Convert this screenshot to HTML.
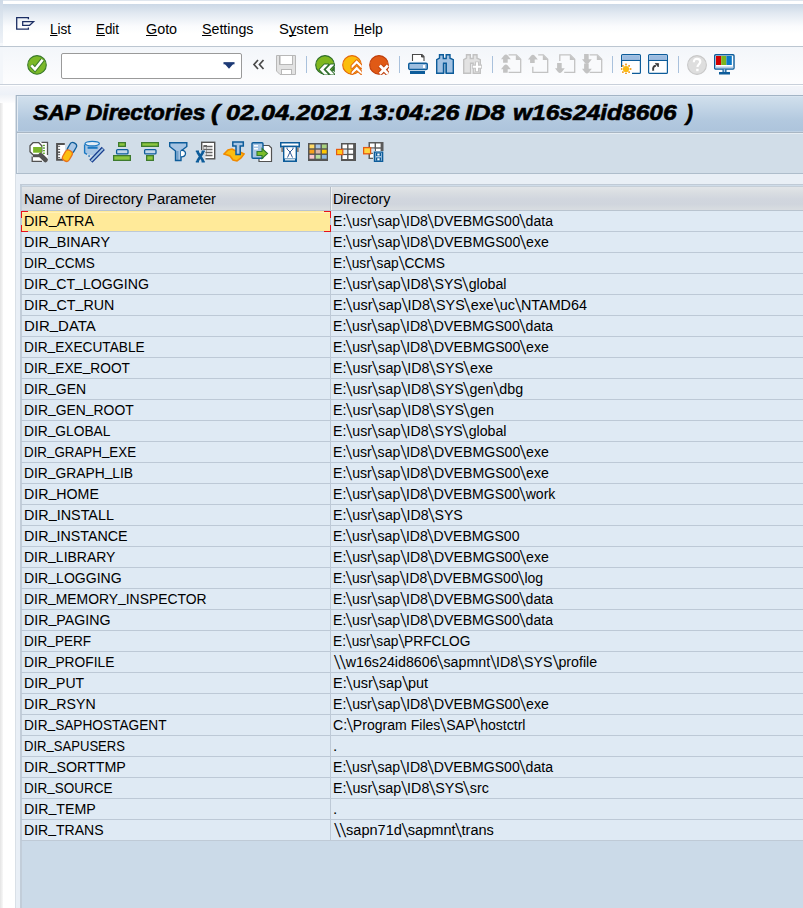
<!DOCTYPE html>
<html><head><meta charset="utf-8">
<style>
html,body{margin:0;padding:0;}
body{width:803px;height:908px;overflow:hidden;position:relative;background:#fff;font-family:"Liberation Sans",sans-serif;}
.a{position:absolute;}
.t{position:absolute;font-size:15.5px;line-height:21px;white-space:pre;color:#000;transform-origin:0 0;}
.bs{display:inline-block;transform:translateY(1.3px) scale(1.05,1.24) skewX(12deg);transform-origin:50% 62%;margin:0 0.6px 0 1.5px;}.us{position:relative;top:-1.6px;}
.hl{position:absolute;left:21px;width:782px;height:1px;background:#bdc9d6;}
.ti{position:absolute;top:98px;font-size:21.5px;line-height:30px;font-weight:bold;font-style:italic;white-space:pre;transform-origin:0 0;color:#000;-webkit-text-stroke:0.6px #000;}
.menu{position:absolute;top:19px;font-size:15.5px;line-height:20px;white-space:pre;color:#000;transform-origin:0 0;}
.menu u{text-decoration:underline;text-decoration-thickness:1px;text-underline-offset:1px;text-decoration-skip-ink:none;}
</style></head><body>
<!-- left strip -->
<div class="a" style="left:0;top:95px;width:3px;height:813px;background:linear-gradient(90deg,#e4e4e4,#f8f8f8);"></div>
<div class="a" style="left:0;top:0;width:3px;height:43px;background:linear-gradient(180deg,#cfdae7,#dfe7f0 20px,#eef2f7 43px);"></div>
<div class="a" style="left:0;top:43px;width:3px;height:3px;background:#f6f8fb"></div>
<div class="a" style="left:0;top:47px;width:3px;height:37px;background:#f3f6fa"></div>
<!-- menu bar -->
<div class="a" style="left:3px;top:0;width:800px;height:1px;background:#dfe6ee"></div>
<div class="a" style="left:3px;top:1px;width:800px;height:3px;background:#fff"></div>
<div class="a" style="left:3px;top:4px;width:800px;height:42px;background:linear-gradient(180deg,#cbd8e6 0px,#e3eaf2 10px,#fafbfd 22px,#fff 30px,#fff 42px)"></div>
<div class="a" style="left:0;top:46px;width:803px;height:1px;background:#bcc6d1"></div>
<!-- toolbar -->
<div class="a" style="left:3px;top:47px;width:800px;height:37px;background:linear-gradient(180deg,#f3f6fa,#fdfdfe)"></div>
<div class="a" style="left:0;top:84px;width:803px;height:1px;background:#c9d0da"></div>
<div class="a" style="left:0px;top:85px;width:803px;height:1px;background:#fdfeff"></div>
<div class="a" style="left:0px;top:86px;width:803px;height:9px;background:linear-gradient(180deg,#f3f5f9,#edf1f8)"></div>
<div class="a" style="left:0px;top:95px;width:15px;height:8px;background:linear-gradient(180deg,#eff2f7,#fdfdfe)"></div>
<!-- main panel -->
<div class="a" style="left:15px;top:95px;width:788px;height:813px;background:#e9eff6"></div>
<div class="a" style="left:15px;top:95px;width:1px;height:813px;background:#d9e0e7"></div>
<div class="a" style="left:16px;top:95px;width:1px;height:79px;background:#aebdcc"></div>
<div class="a" style="left:17px;top:96px;width:1px;height:77px;background:#e4ecf4"></div>
<div class="a" style="left:16px;top:95px;width:787px;height:1px;background:#a3b4c5"></div>
<!-- title -->
<div class="a" style="left:18px;top:96px;width:785px;height:35px;background:linear-gradient(180deg,#dfe9f3 0px,#d0dfec 1px,#b3c9df 24px,#adc4dc 35px)"></div>
<div class="a" style="left:17px;top:131px;width:786px;height:1px;background:#c0d2e4"></div>
<div class="a" style="left:17px;top:132px;width:786px;height:1px;background:#a9b6c3"></div>
<div class="a" style="left:17px;top:133px;width:786px;height:1px;background:#e6edf3"></div>
<div class="a" style="left:18px;top:134px;width:785px;height:39px;background:#d1dde8"></div>
<div class="a" style="left:17px;top:173px;width:786px;height:1px;background:#aebdcb"></div>
<div class="ti" style="left:32.50px;transform:scaleX(1.0671)">SAP Directories</div>
<div class="ti" style="left:210.90px;transform:scaleX(1.2111)">(</div>
<div class="ti" style="left:226.23px;transform:scaleX(1.1745)">02.04.2021</div>
<div class="ti" style="left:358.70px;transform:scaleX(1.1663)">13:04:26</div>
<div class="ti" style="left:465.20px;transform:scaleX(1.1912)">ID8</div>
<div class="ti" style="left:512.56px;transform:scaleX(1.1406)">w16s24id8606</div>
<div class="ti" style="left:686.23px;transform:scaleX(0.9667)">)</div>
<!-- table -->
<div class="a" style="left:20px;top:184px;width:783px;height:724px;background:#cbdae8"></div>
<div class="a" style="left:20px;top:184px;width:2px;height:724px;background:#c2cdd9"></div>
<div class="a" style="left:20px;top:184px;width:783px;height:1px;background:#c0cad6"></div>
<div class="a" style="left:22px;top:185px;width:781px;height:1px;background:#cfdce9"></div>
<div class="a" style="left:22px;top:186px;width:781px;height:1px;background:#c5ced8"></div>
<div class="a" style="left:22px;top:187px;width:781px;height:23px;background:linear-gradient(180deg,#e2e5e8 0px,#dadee2 5px,#d1d6de 12px,#d0d5dd 17px,#d9dde1 23px)"></div>
<div class="a" style="left:22px;top:210px;width:781px;height:1px;background:#b9c4cf"></div>
<div class="a" style="left:330px;top:187px;width:1px;height:23px;background:#b5bdc6"></div>
<div class="a" style="left:331px;top:187px;width:1px;height:23px;background:#eef0f2"></div>
<div class="a" style="left:22px;top:211px;width:781px;height:629px;background:#dfeaf4"></div>
<div class="hl" style="top:231px"></div>
<div class="hl" style="top:252px"></div>
<div class="hl" style="top:273px"></div>
<div class="hl" style="top:294px"></div>
<div class="hl" style="top:315px"></div>
<div class="hl" style="top:336px"></div>
<div class="hl" style="top:357px"></div>
<div class="hl" style="top:378px"></div>
<div class="hl" style="top:399px"></div>
<div class="hl" style="top:420px"></div>
<div class="hl" style="top:441px"></div>
<div class="hl" style="top:462px"></div>
<div class="hl" style="top:483px"></div>
<div class="hl" style="top:504px"></div>
<div class="hl" style="top:525px"></div>
<div class="hl" style="top:546px"></div>
<div class="hl" style="top:567px"></div>
<div class="hl" style="top:588px"></div>
<div class="hl" style="top:609px"></div>
<div class="hl" style="top:630px"></div>
<div class="hl" style="top:651px"></div>
<div class="hl" style="top:672px"></div>
<div class="hl" style="top:693px"></div>
<div class="hl" style="top:714px"></div>
<div class="hl" style="top:735px"></div>
<div class="hl" style="top:756px"></div>
<div class="hl" style="top:777px"></div>
<div class="hl" style="top:798px"></div>
<div class="hl" style="top:819px"></div>
<div class="hl" style="top:840px"></div>
<div class="a" style="left:330px;top:211px;width:1px;height:629px;background:#bdc9d6"></div>
<div class="a" style="left:22px;top:840px;width:781px;height:1px;background:#bfcad6"></div>
<!-- selected cell -->
<div class="a" style="left:22px;top:211px;width:308px;height:20px;background:#ffea99"></div>
<div class="a" style="left:22px;top:212px;width:308px;height:1px;background:#fff0b8"></div>
<div class="a" style="left:21px;top:211px;width:7px;height:1px;background:#e8101a"></div>
<div class="a" style="left:21px;top:211px;width:1px;height:7px;background:#e8101a"></div>
<div class="a" style="left:21px;top:231px;width:7px;height:1px;background:#e8101a"></div>
<div class="a" style="left:21px;top:225px;width:1px;height:7px;background:#e8101a"></div>
<div class="a" style="left:324px;top:211px;width:7px;height:1px;background:#e8101a"></div>
<div class="a" style="left:330px;top:211px;width:1px;height:7px;background:#e8101a"></div>
<div class="a" style="left:324px;top:231px;width:7px;height:1px;background:#e8101a"></div>
<div class="a" style="left:330px;top:225px;width:1px;height:7px;background:#e8101a"></div>
<div class="t" style="left:24.05px;top:188px;transform:scaleX(0.9527);">Name of Directory Parameter</div>
<div class="t" style="left:332.77px;top:188px;transform:scaleX(0.9262);">Directory</div>
<div class="t" style="left:23.57px;top:210px;transform:scaleX(0.9267);">DIR<span class="us">_</span>ATRA</div>
<div class="t" style="left:332.79px;top:210px;transform:scaleX(0.9079);">E:<span class="bs">\</span>usr<span class="bs">\</span>sap<span class="bs">\</span>ID8<span class="bs">\</span>DVEBMGS00<span class="bs">\</span>data</div>
<div class="t" style="left:23.57px;top:231px;transform:scaleX(0.9275);">DIR<span class="us">_</span>BINARY</div>
<div class="t" style="left:332.79px;top:231px;transform:scaleX(0.9102);">E:<span class="bs">\</span>usr<span class="bs">\</span>sap<span class="bs">\</span>ID8<span class="bs">\</span>DVEBMGS00<span class="bs">\</span>exe</div>
<div class="t" style="left:23.62px;top:252px;transform:scaleX(0.8750);">DIR<span class="us">_</span>CCMS</div>
<div class="t" style="left:332.81px;top:252px;transform:scaleX(0.8880);">E:<span class="bs">\</span>usr<span class="bs">\</span>sap<span class="bs">\</span>CCMS</div>
<div class="t" style="left:23.59px;top:273px;transform:scaleX(0.9119);">DIR<span class="us">_</span>CT<span class="us">_</span>LOGGING</div>
<div class="t" style="left:332.79px;top:273px;transform:scaleX(0.9144);">E:<span class="bs">\</span>usr<span class="bs">\</span>sap<span class="bs">\</span>ID8<span class="bs">\</span>SYS<span class="bs">\</span>global</div>
<div class="t" style="left:23.58px;top:294px;transform:scaleX(0.9198);">DIR<span class="us">_</span>CT<span class="us">_</span>RUN</div>
<div class="t" style="left:332.77px;top:294px;transform:scaleX(0.9278);">E:<span class="bs">\</span>usr<span class="bs">\</span>sap<span class="bs">\</span>ID8<span class="bs">\</span>SYS<span class="bs">\</span>exe<span class="bs">\</span>uc<span class="bs">\</span>NTAMD64</div>
<div class="t" style="left:23.53px;top:315px;transform:scaleX(0.9658);">DIR<span class="us">_</span>DATA</div>
<div class="t" style="left:332.79px;top:315px;transform:scaleX(0.9079);">E:<span class="bs">\</span>usr<span class="bs">\</span>sap<span class="bs">\</span>ID8<span class="bs">\</span>DVEBMGS00<span class="bs">\</span>data</div>
<div class="t" style="left:23.62px;top:336px;transform:scaleX(0.8830);">DIR<span class="us">_</span>EXECUTABLE</div>
<div class="t" style="left:332.79px;top:336px;transform:scaleX(0.9102);">E:<span class="bs">\</span>usr<span class="bs">\</span>sap<span class="bs">\</span>ID8<span class="bs">\</span>DVEBMGS00<span class="bs">\</span>exe</div>
<div class="t" style="left:23.62px;top:357px;transform:scaleX(0.8849);">DIR<span class="us">_</span>EXE<span class="us">_</span>ROOT</div>
<div class="t" style="left:332.78px;top:357px;transform:scaleX(0.9233);">E:<span class="bs">\</span>usr<span class="bs">\</span>sap<span class="bs">\</span>ID8<span class="bs">\</span>SYS<span class="bs">\</span>exe</div>
<div class="t" style="left:23.60px;top:378px;transform:scaleX(0.9015);">DIR<span class="us">_</span>GEN</div>
<div class="t" style="left:332.78px;top:378px;transform:scaleX(0.9205);">E:<span class="bs">\</span>usr<span class="bs">\</span>sap<span class="bs">\</span>ID8<span class="bs">\</span>SYS<span class="bs">\</span>gen<span class="bs">\</span>dbg</div>
<div class="t" style="left:23.60px;top:399px;transform:scaleX(0.8967);">DIR<span class="us">_</span>GEN<span class="us">_</span>ROOT</div>
<div class="t" style="left:332.78px;top:399px;transform:scaleX(0.9233);">E:<span class="bs">\</span>usr<span class="bs">\</span>sap<span class="bs">\</span>ID8<span class="bs">\</span>SYS<span class="bs">\</span>gen</div>
<div class="t" style="left:23.61px;top:420px;transform:scaleX(0.8875);">DIR<span class="us">_</span>GLOBAL</div>
<div class="t" style="left:332.79px;top:420px;transform:scaleX(0.9144);">E:<span class="bs">\</span>usr<span class="bs">\</span>sap<span class="bs">\</span>ID8<span class="bs">\</span>SYS<span class="bs">\</span>global</div>
<div class="t" style="left:23.64px;top:441px;transform:scaleX(0.8612);">DIR<span class="us">_</span>GRAPH<span class="us">_</span>EXE</div>
<div class="t" style="left:332.79px;top:441px;transform:scaleX(0.9102);">E:<span class="bs">\</span>usr<span class="bs">\</span>sap<span class="bs">\</span>ID8<span class="bs">\</span>DVEBMGS00<span class="bs">\</span>exe</div>
<div class="t" style="left:23.61px;top:462px;transform:scaleX(0.8917);">DIR<span class="us">_</span>GRAPH<span class="us">_</span>LIB</div>
<div class="t" style="left:332.79px;top:462px;transform:scaleX(0.9102);">E:<span class="bs">\</span>usr<span class="bs">\</span>sap<span class="bs">\</span>ID8<span class="bs">\</span>DVEBMGS00<span class="bs">\</span>exe</div>
<div class="t" style="left:23.59px;top:483px;transform:scaleX(0.9150);">DIR<span class="us">_</span>HOME</div>
<div class="t" style="left:332.79px;top:483px;transform:scaleX(0.9082);">E:<span class="bs">\</span>usr<span class="bs">\</span>sap<span class="bs">\</span>ID8<span class="bs">\</span>DVEBMGS00<span class="bs">\</span>work</div>
<div class="t" style="left:23.57px;top:504px;transform:scaleX(0.9260);">DIR<span class="us">_</span>INSTALL</div>
<div class="t" style="left:332.79px;top:504px;transform:scaleX(0.9142);">E:<span class="bs">\</span>usr<span class="bs">\</span>sap<span class="bs">\</span>ID8<span class="bs">\</span>SYS</div>
<div class="t" style="left:23.58px;top:525px;transform:scaleX(0.9207);">DIR<span class="us">_</span>INSTANCE</div>
<div class="t" style="left:332.79px;top:525px;transform:scaleX(0.9064);">E:<span class="bs">\</span>usr<span class="bs">\</span>sap<span class="bs">\</span>ID8<span class="bs">\</span>DVEBMGS00</div>
<div class="t" style="left:23.60px;top:546px;transform:scaleX(0.9020);">DIR<span class="us">_</span>LIBRARY</div>
<div class="t" style="left:332.79px;top:546px;transform:scaleX(0.9102);">E:<span class="bs">\</span>usr<span class="bs">\</span>sap<span class="bs">\</span>ID8<span class="bs">\</span>DVEBMGS00<span class="bs">\</span>exe</div>
<div class="t" style="left:23.59px;top:567px;transform:scaleX(0.9075);">DIR<span class="us">_</span>LOGGING</div>
<div class="t" style="left:332.80px;top:567px;transform:scaleX(0.9026);">E:<span class="bs">\</span>usr<span class="bs">\</span>sap<span class="bs">\</span>ID8<span class="bs">\</span>DVEBMGS00<span class="bs">\</span>log</div>
<div class="t" style="left:23.60px;top:588px;transform:scaleX(0.8970);">DIR<span class="us">_</span>MEMORY<span class="us">_</span>INSPECTOR</div>
<div class="t" style="left:332.79px;top:588px;transform:scaleX(0.9079);">E:<span class="bs">\</span>usr<span class="bs">\</span>sap<span class="bs">\</span>ID8<span class="bs">\</span>DVEBMGS00<span class="bs">\</span>data</div>
<div class="t" style="left:23.58px;top:609px;transform:scaleX(0.9161);">DIR<span class="us">_</span>PAGING</div>
<div class="t" style="left:332.79px;top:609px;transform:scaleX(0.9079);">E:<span class="bs">\</span>usr<span class="bs">\</span>sap<span class="bs">\</span>ID8<span class="bs">\</span>DVEBMGS00<span class="bs">\</span>data</div>
<div class="t" style="left:23.63px;top:630px;transform:scaleX(0.8747);">DIR<span class="us">_</span>PERF</div>
<div class="t" style="left:332.82px;top:630px;transform:scaleX(0.8843);">E:<span class="bs">\</span>usr<span class="bs">\</span>sap<span class="bs">\</span>PRFCLOG</div>
<div class="t" style="left:23.61px;top:651px;transform:scaleX(0.8890);">DIR<span class="us">_</span>PROFILE</div>
<div class="t" style="left:333.70px;top:651px;transform:scaleX(0.9182);"><span class="bs">\</span><span class="bs">\</span>w16s24id8606<span class="bs">\</span>sapmnt<span class="bs">\</span>ID8<span class="bs">\</span>SYS<span class="bs">\</span>profile</div>
<div class="t" style="left:23.59px;top:672px;transform:scaleX(0.9077);">DIR<span class="us">_</span>PUT</div>
<div class="t" style="left:332.77px;top:672px;transform:scaleX(0.9327);">E:<span class="bs">\</span>usr<span class="bs">\</span>sap<span class="bs">\</span>put</div>
<div class="t" style="left:23.59px;top:693px;transform:scaleX(0.9145);">DIR<span class="us">_</span>RSYN</div>
<div class="t" style="left:332.79px;top:693px;transform:scaleX(0.9102);">E:<span class="bs">\</span>usr<span class="bs">\</span>sap<span class="bs">\</span>ID8<span class="bs">\</span>DVEBMGS00<span class="bs">\</span>exe</div>
<div class="t" style="left:23.62px;top:714px;transform:scaleX(0.8814);">DIR<span class="us">_</span>SAPHOSTAGENT</div>
<div class="t" style="left:332.79px;top:714px;transform:scaleX(0.9071);">C:<span class="bs">\</span>Program Files<span class="bs">\</span>SAP<span class="bs">\</span>hostctrl</div>
<div class="t" style="left:23.66px;top:735px;transform:scaleX(0.8432);">DIR<span class="us">_</span>SAPUSERS</div>
<div class="t" style="left:333px;top:735px">.</div>
<div class="t" style="left:23.58px;top:756px;transform:scaleX(0.9183);">DIR<span class="us">_</span>SORTTMP</div>
<div class="t" style="left:332.79px;top:756px;transform:scaleX(0.9079);">E:<span class="bs">\</span>usr<span class="bs">\</span>sap<span class="bs">\</span>ID8<span class="bs">\</span>DVEBMGS00<span class="bs">\</span>data</div>
<div class="t" style="left:23.63px;top:777px;transform:scaleX(0.8700);">DIR<span class="us">_</span>SOURCE</div>
<div class="t" style="left:332.78px;top:777px;transform:scaleX(0.9216);">E:<span class="bs">\</span>usr<span class="bs">\</span>sap<span class="bs">\</span>ID8<span class="bs">\</span>SYS<span class="bs">\</span>src</div>
<div class="t" style="left:23.58px;top:798px;transform:scaleX(0.9156);">DIR<span class="us">_</span>TEMP</div>
<div class="t" style="left:333px;top:798px">.</div>
<div class="t" style="left:23.59px;top:819px;transform:scaleX(0.9058);">DIR<span class="us">_</span>TRANS</div>
<div class="t" style="left:333.70px;top:819px;transform:scaleX(0.9382);"><span class="bs">\</span><span class="bs">\</span>sapn71d<span class="bs">\</span>sapmnt<span class="bs">\</span>trans</div>
<div class="a" style="left:306px;top:56px;width:1px;height:17px;background:#a9c1dc"></div>
<div class="a" style="left:399px;top:56px;width:1px;height:17px;background:#a9c1dc"></div>
<div class="a" style="left:492px;top:56px;width:1px;height:17px;background:#a9c1dc"></div>
<div class="a" style="left:612px;top:56px;width:1px;height:17px;background:#a9c1dc"></div>
<div class="a" style="left:678px;top:56px;width:1px;height:17px;background:#a9c1dc"></div>
<svg class="a" style="left:27px;top:55px" width="20" height="20" viewBox="0 0 20 20"><circle cx="10" cy="9.9" r="9.3" fill="#7cb928" stroke="#3a7a2c" stroke-width="1.1"/>
<path d="M4.3 10.3 L8 14.3 L15.6 4.8" fill="none" stroke="#3f7f2e" stroke-width="4.6" stroke-linejoin="miter"/>
<path d="M4.3 10.3 L8 14.3 L15.6 4.8" fill="none" stroke="#fff" stroke-width="2.6" stroke-linejoin="miter"/></svg>
<div class="a" style="left:61px;top:53px;width:179px;height:24px;border:1px solid #9a9a9a;border-radius:2px;background:#fff"></div>
<svg class="a" style="left:223px;top:62px" width="12" height="7" viewBox="0 0 12 7"><path d="M0.5 0.5 H11.5 L6 6.8 Z" fill="#1d3a76"/><rect x="0.5" y="0.3" width="11" height="2" fill="#1d3a76"/></svg>
<svg class="a" style="left:252px;top:59px" width="13" height="11" viewBox="0 0 13 11"><path d="M6 1 L2 5.5 L6 10 M11.5 1 L7.5 5.5 L11.5 10" fill="none" stroke="#4a4a4a" stroke-width="1.7"/></svg>
<svg class="a" style="left:276px;top:55px" width="20" height="20" viewBox="0 0 20 20"><path d="M0.5 0.5 H19.5 V19.5 H4 L0.5 16 Z" fill="#e2e2e2" stroke="#b8b8b8" stroke-width="1"/>
<rect x="3.5" y="0.5" width="13" height="9" fill="#fff" stroke="#b8b8b8" stroke-width="1"/>
<rect x="3" y="1" width="1.5" height="8" fill="#b0b0b0"/>
<rect x="5.5" y="14.5" width="10" height="5" fill="#fff" stroke="#b8b8b8" stroke-width="1"/></svg>
<svg class="a" style="left:315px;top:55px" width="20" height="20" viewBox="0 0 20 20"><circle cx="10" cy="9.9" r="9.3" fill="#7fb71f" stroke="#2e6d2b" stroke-width="1.1"/>
<path d="M4.6 14.6 L9.4 9.6 H13.2 L8.4 14.6 L13.2 19.6 H9.4 Z M10.8 14.6 L15.6 9.6 H19.4 L14.6 14.6 L19.4 19.6 H15.6 Z" fill="#2e6d2b" stroke="#2e6d2b" stroke-width="2" stroke-linejoin="round"/>
<path d="M4.6 14.6 L9.4 9.6 H13.2 L8.4 14.6 L13.2 19.6 H9.4 Z M10.8 14.6 L15.6 9.6 H19.4 L14.6 14.6 L19.4 19.6 H15.6 Z" fill="#fff"/>
<path d="M16.8 14.6 L19.8 11.6 V17.6 Z" fill="#2e6d2b"/></svg>
<svg class="a" style="left:342px;top:55px" width="20" height="20" viewBox="0 0 20 20"><circle cx="10" cy="9.9" r="9.3" fill="#fbbd0c" stroke="#e4680c" stroke-width="1.1"/>
<path d="M9.6 10.6 L14.7 5.2 L19.8 10.6 V13.4 L14.7 8.6 L9.6 13.4 Z M9.6 17 L14.7 11.6 L19.8 17 V19.6 L14.7 15 L9.6 19.6 Z" fill="#e4680c" stroke="#e4680c" stroke-width="2" stroke-linejoin="round"/>
<path d="M9.6 10.6 L14.7 5.2 L19.8 10.6 V13.4 L14.7 8.6 L9.6 13.4 Z M9.6 17 L14.7 11.6 L19.8 17 V19.6 L14.7 15 L9.6 19.6 Z" fill="#fff"/></svg>
<svg class="a" style="left:369px;top:55px" width="20" height="20" viewBox="0 0 20 20"><circle cx="10" cy="9.9" r="9.3" fill="#e05a16" stroke="#bf3f0c" stroke-width="1.1"/>
<path d="M10.8 10.6 L18.8 18.8 M18.8 10.6 L10.8 18.8" fill="none" stroke="#bf3f0c" stroke-width="4.8"/>
<path d="M10.8 10.6 L18.8 18.8 M18.8 10.6 L10.8 18.8" fill="none" stroke="#fff" stroke-width="2.8"/></svg>
<svg class="a" style="left:408px;top:54px" width="20" height="20" viewBox="0 0 20 20"><path d="M4.5 7 V0.5 H14 L16 2.5 V7" fill="#fff" stroke="#4a4a4a" stroke-width="1.1"/>
<path d="M13.5 0.5 V3 H16" fill="#4a4a4a" stroke="#4a4a4a" stroke-width="1"/>
<rect x="0.7" y="9.2" width="18.6" height="6.3" rx="1.3" fill="#9ebfe0" stroke="#0d5c9a" stroke-width="1.4"/>
<rect x="15" y="11" width="2" height="3" fill="#fff"/>
<rect x="2" y="17" width="15" height="3" fill="#0d5c9a"/></svg>
<svg class="a" style="left:436px;top:54px" width="18" height="20" viewBox="0 0 18 20"><path d="M3.5 0.7 H7.3 V4.5 H10.2 V0.7 H14 V4.2 L17.3 5.7 V19.3 H10.2 V9.3 H7.6 V19.3 H0.7 V5.7 L3.5 4.2 Z" fill="#a3c2e2" stroke="#0d5c9a" stroke-width="1.4"/><path d="M7.6 9.3 V19.3 M10.2 9.3 V19.3" stroke="#0d5c9a" stroke-width="1.4"/></svg>
<svg class="a" style="left:463px;top:54px" width="19" height="20" viewBox="0 0 19 20"><path d="M3.5 0.7 H7.3 V4.5 H10.2 V0.7 H14 V4.2 L17.3 5.7 V19.3 H10.2 V9.3 H7.6 V19.3 H0.7 V5.7 L3.5 4.2 Z" fill="#e2e2e2" stroke="#c2c2c2" stroke-width="1.4"/><path d="M14 7.5 V18 M9 12.7 H19" stroke="#c6c6c6" stroke-width="4.2"/><path d="M14 8.3 V17.2 M9.8 12.7 H18.2" stroke="#fff" stroke-width="2"/></svg>
<svg class="a" style="left:504.8px;top:53.5px" width="17" height="21" viewBox="0 0 17 21"><path d="M0.8 0.9 H11.3 L15.7 5.3 V18.3 H0.8 Z" fill="#f9fafc"/><path d="M3.6 0.9 H11.3 L15.7 5.3 V18.3 H3.6" fill="none" stroke="#c3c3c3" stroke-width="1.3"/><path d="M10.8 0.9 V6 H15.7 Z" fill="#c3c3c3"/></svg>
<svg class="a" style="left:498px;top:52px" width="14" height="22" viewBox="0 0 14 22"><rect x="2" y="1" width="12" height="20" fill="#f4f6fa" opacity="0"/><path d="M3 7.3 L6 3.6 Q7.9 1.5 9.8 3.6 L12.8 7.3 H9.7 V10.7 H5.1 V7.3 Z" fill="#c3c3c3"/><path d="M3 17.3 L6 13.6 Q7.9 11.5 9.8 13.6 L12.8 17.3 H9.7 V20.7 H5.1 V17.3 Z" fill="#c3c3c3"/></svg>
<svg class="a" style="left:532px;top:53.5px" width="17" height="21" viewBox="0 0 17 21"><path d="M0.8 0.9 H11.3 L15.7 5.3 V18.3 H0.8 Z" fill="#f9fafc"/><path d="M0.8 12.8 V18.3 H15.7 V5.3 L11.3 0.9 H6.2" fill="none" stroke="#c3c3c3" stroke-width="1.3"/><path d="M10.8 0.9 V6 H15.7 Z" fill="#c3c3c3"/></svg>
<svg class="a" style="left:525px;top:52px" width="14" height="14" viewBox="0 0 14 14"><path d="M3 7.5 L6 3.8000000000000003 Q7.9 1.7000000000000002 9.8 3.8000000000000003 L12.8 7.5 H9.7 V10.899999999999999 H5.1 V7.5 Z" fill="#c3c3c3"/></svg>
<svg class="a" style="left:559px;top:53.5px" width="17" height="21" viewBox="0 0 17 21"><path d="M0.8 0.9 H11.3 L15.7 5.3 V18.3 H0.8 Z" fill="#f9fafc"/><path d="M0.8 7 V0.9 H11.3 L15.7 5.3 V18.3 H5.2" fill="none" stroke="#c3c3c3" stroke-width="1.3"/><path d="M10.8 0.9 V6 H15.7 Z" fill="#c3c3c3"/></svg>
<svg class="a" style="left:552px;top:62px" width="14" height="13" viewBox="0 0 14 13"><path d="M5.1 1 H9.7 V6.3 H12.8 L9.8 10 Q7.9 12.1 6 10 L3 6.3 H5.1 Z" fill="#c3c3c3"/></svg>
<svg class="a" style="left:586.2px;top:53.5px" width="17" height="21" viewBox="0 0 17 21"><path d="M0.8 0.9 H11.3 L15.7 5.3 V18.3 H0.8 Z" fill="#f9fafc"/><path d="M3.6 0.9 H11.3 L15.7 5.3 V18.3 H3.6" fill="none" stroke="#c3c3c3" stroke-width="1.3"/><path d="M10.8 0.9 V6 H15.7 Z" fill="#c3c3c3"/></svg>
<svg class="a" style="left:579px;top:52px" width="14" height="23" viewBox="0 0 14 23"><path d="M5.1 2 H9.7 V7.3 H12.8 L9.8 11 Q7.9 13.1 6 11 L3 7.3 H5.1 Z" fill="#c3c3c3"/><path d="M5.1 11.5 H9.7 V16.8 H12.8 L9.8 20.5 Q7.9 22.6 6 20.5 L3 16.8 H5.1 Z" fill="#c3c3c3"/></svg>
<svg class="a" style="left:621px;top:54px" width="20" height="20" viewBox="0 0 20 20"><rect x="0.6" y="0.6" width="18.8" height="18.8" rx="1" fill="#fff" stroke="#0d5c9a" stroke-width="1.2"/><rect x="1.3" y="1.3" width="17.4" height="4.6" fill="#9bbbe0"/><rect x="1" y="5.9" width="18" height="1.1" fill="#0d5c9a"/><rect x="0" y="10" width="11" height="10" fill="#fff"/><rect x="0" y="10" width="1.2" height="3" fill="#0d5c9a"/><g fill="#f29100"><circle cx="5" cy="15" r="3.1" fill="#fbbb12"/><rect x="4.2" y="9.6" width="1.6" height="1.8"/><rect x="4.2" y="18.6" width="1.6" height="1.8"/><rect x="-0.4" y="14.2" width="1.8" height="1.6"/><rect x="8.6" y="14.2" width="1.8" height="1.6"/><rect x="1.1" y="11.1" width="1.6" height="1.6"/><rect x="7.3" y="11.1" width="1.6" height="1.6"/><rect x="1.1" y="17.3" width="1.6" height="1.6"/><rect x="7.3" y="17.3" width="1.6" height="1.6"/></g></svg>
<svg class="a" style="left:648px;top:54px" width="20" height="20" viewBox="0 0 20 20"><rect x="0.6" y="0.6" width="18.8" height="18.8" rx="1" fill="#fff" stroke="#0d5c9a" stroke-width="1.2"/><rect x="1.3" y="1.3" width="17.4" height="4.6" fill="#9bbbe0"/><rect x="1" y="5.9" width="18" height="1.1" fill="#0d5c9a"/><path d="M5.3 16.8 C4.6 13.8 5.6 12 7.9 11.8" fill="none" stroke="#3c3c3c" stroke-width="1.9"/><path d="M7.3 9.4 L10.6 9.6 L10.3 12.9 Z" fill="#3c3c3c" stroke="#3c3c3c" stroke-width="0.8"/></svg>
<svg class="a" style="left:687px;top:55px" width="20" height="20" viewBox="0 0 20 20"><circle cx="10" cy="10" r="9.4" fill="#dedede" stroke="#c8c8c8" stroke-width="1.1"/><path d="M6.8 7.2 C6.8 4.6 8.3 3.8 10 3.8 C12 3.8 13.3 5 13.3 6.8 C13.3 9 10.5 9.5 10.5 12" fill="none" stroke="#fff" stroke-width="2.2"/><rect x="9.2" y="13.8" width="2.4" height="2.4" fill="#fff"/></svg>
<svg class="a" style="left:714px;top:54px" width="21" height="21" viewBox="0 0 21 21"><rect x="0.7" y="0.7" width="19.3" height="14.3" rx="1" fill="#fff" stroke="#0d5c9a" stroke-width="1.4"/><rect x="2" y="2" width="5.2" height="9" fill="#d10000"/><rect x="7.2" y="2" width="5.2" height="9" fill="#7cb41c"/><rect x="12.4" y="2" width="5.4" height="9" fill="#0a78c6"/><rect x="1.4" y="12.5" width="17.9" height="1.8" fill="#b4cce6"/><rect x="8.5" y="15.3" width="4" height="3" fill="#0d5c9a"/><rect x="9.7" y="15.3" width="1.5" height="3" fill="#b4cce6"/><rect x="5" y="18" width="11" height="2.5" fill="#0d5c9a"/></svg>
<svg class="a" style="left:27px;top:140px" width="24" height="24" viewBox="0 0 24 24"><rect x="5.2" y="2.2" width="15.4" height="19.2" fill="#fff"/>
<path d="M14.5 2.3 H20.5 V15 M5.2 16.5 V21.4 H15" fill="none" stroke="#525252" stroke-width="1.3"/>
<rect x="15.8" y="4.8" width="2.1" height="1.3" fill="#5ca82a"/><rect x="15.8" y="7.4" width="2.1" height="1.3" fill="#3f8f25"/><rect x="15.8" y="10" width="2.1" height="1.3" fill="#5ca82a"/><rect x="15.8" y="12.6" width="2.1" height="1.3" fill="#5ca82a"/>
<path d="M6 2.7 H11.8 L14.8 5.7 V11.8 L11.8 14.8 H6 L3 11.8 V5.7 Z" fill="#fff" stroke="#525252" stroke-width="1.3"/>
<rect x="6.1" y="7" width="8.7" height="5.7" fill="#7ab52a"/>
<rect x="6" y="15" width="7.5" height="2.2" fill="#525252"/>
<path d="M14 15.5 L18.6 20" stroke="#525252" stroke-width="4.6" stroke-linecap="round"/></svg>
<svg class="a" style="left:54px;top:140px" width="24" height="24" viewBox="0 0 24 24"><rect x="3" y="4" width="8" height="16" fill="#fff"/>
<path d="M10.8 4 H3.1 V19.8 H9" fill="none" stroke="#525252" stroke-width="2"/>
<rect x="4.1" y="5.8" width="2" height="1" fill="#525252"/><rect x="4.1" y="8.9" width="2" height="1" fill="#525252"/><rect x="4.1" y="11.4" width="2" height="1.7" fill="#525252"/><rect x="4.1" y="14.2" width="2" height="1" fill="#525252"/><rect x="4.1" y="17.1" width="2" height="1" fill="#525252"/>
<g transform="rotate(30 15.5 12)"><rect x="12" y="1.8" width="7" height="10.5" rx="3" fill="#a9c7e6" stroke="#0e5d9a" stroke-width="1.3"/><rect x="11.8" y="10.5" width="7.4" height="11.5" rx="3.2" fill="#fcc010" stroke="#e8701e" stroke-width="1.3"/></g></svg>
<svg class="a" style="left:82px;top:140px" width="24" height="24" viewBox="0 0 24 24"><path d="M2.6 4 Q2.6 1.2 10.2 1.2 Q17.8 1.2 17.8 4 V7.5 L13.5 14.5 Q9.5 16 6 14.3 L2.6 12.5 Z" fill="#a9c6e4"/>
<ellipse cx="10.2" cy="3.6" rx="7.2" ry="2.3" fill="#e3edf6" stroke="#1a78c2" stroke-width="1.2"/>
<rect x="5.6" y="6.6" width="10" height="2.2" fill="#1a78c2"/>
<path d="M2.6 4.5 V12.8 L5 14.3" fill="none" stroke="#1a78c2" stroke-width="1.4"/>
<rect x="6.3" y="15.2" width="1.6" height="1.7" fill="#3d80b8"/>
<path d="M8.9 21.2 L21.3 8.4" stroke="#173c8e" stroke-width="4.4"/>
<path d="M9.3 20.8 L20.9 8.8" stroke="#a6c8e4" stroke-width="1.8"/></svg>
<svg class="a" style="left:113px;top:142px" width="19" height="20" viewBox="0 0 19 20"><rect x="5" y="0" width="8" height="5" fill="#3d7a2e"/><rect x="6.3" y="1.3" width="5.4" height="2.4" fill="#8dc63f"/><rect x="3.6" y="7.6" width="11.4" height="4.3" rx="1" fill="#c3d6ea" stroke="#0d5c9a" stroke-width="1.3"/><rect x="0" y="13" width="18" height="6" fill="#3d7a2e"/><rect x="1.3" y="14.3" width="15.4" height="3.4" fill="#8dc63f"/></svg>
<svg class="a" style="left:141px;top:142px" width="19" height="20" viewBox="0 0 19 20"><rect x="0" y="0" width="18" height="5" fill="#3d7a2e"/><rect x="1.3" y="1.3" width="15.4" height="2.4" fill="#8dc63f"/><rect x="3.6" y="7.6" width="11.4" height="4.3" rx="1" fill="#c3d6ea" stroke="#0d5c9a" stroke-width="1.3"/><rect x="5" y="13" width="8" height="6" fill="#3d7a2e"/><rect x="6.3" y="14.3" width="5.4" height="3.4" fill="#8dc63f"/></svg>
<svg class="a" style="left:169px;top:142px" width="19" height="20" viewBox="0 0 19 20"><path d="M0.7 0.7 H17.8 V4.5 L12 9 V18.5 H6.5 V9 L0.7 4.5 Z" fill="#a6c4e3" stroke="#0d5c9a" stroke-width="1.4"/>
<rect x="7.5" y="9" width="2" height="9" fill="#0d5c9a" opacity="0.35"/>
<path d="M12 8.5 C15.5 8 16.5 10 16.5 11.5 C16.5 14 14.5 15 12 14.8" fill="#fff" stroke="#0d5c9a" stroke-width="1.3"/></svg>
<svg class="a" style="left:195px;top:141px" width="21" height="22" viewBox="0 0 21 22"><rect x="6.7" y="1.3" width="13" height="16.5" fill="#fff" stroke="#525252" stroke-width="1.4"/>
<rect x="8.5" y="4" width="3.5" height="11" fill="#666"/>
<path d="M8.5 5.5 H17.5 M8.5 8.5 H17.5 M8.5 11.5 H17.5 M8.5 14.5 H17.5" stroke="#666" stroke-width="1.3"/>
<rect x="9" y="6.2" width="2.5" height="1.5" fill="#fff"/><rect x="9" y="9.2" width="2.5" height="1.5" fill="#fff"/><rect x="9" y="12.2" width="2.5" height="1.5" fill="#fff"/>
<rect x="0" y="9" width="10.5" height="13" fill="#d1dde8"/>
<path d="M2.3 10.8 L8.3 20.2 M8.3 10.8 L2.3 20.2" stroke="#0d5c9a" stroke-width="2.6"/>
<path d="M0.8 10.3 H4 M6.6 10.3 H9.8 M0.8 20.7 H4 M6.6 20.7 H9.8" stroke="#0d5c9a" stroke-width="1.6"/></svg>
<svg class="a" style="left:223px;top:141px" width="22" height="21" viewBox="0 0 22 21"><path d="M1 13 L5 9 L9 8 L13 10 L17 11 L21 13 L18 17 L14 20 L10 19 L7 15 Z" fill="#fbbd10" stroke="#f08a00" stroke-width="1.6"/>
<path d="M9.8 1 H20.3 V5 H17.2 V13.5 H13 V5 H9.8 Z" fill="#a9c6e4" stroke="#0d5c9a" stroke-width="1.5"/></svg>
<svg class="a" style="left:251px;top:142px" width="22" height="21" viewBox="0 0 22 21"><path d="M8 3.5 H18 L20.5 6 V19.5 H8 Z" fill="#fff" stroke="#525252" stroke-width="1.2"/>
<rect x="1" y="0.7" width="11" height="15.5" rx="1" fill="#a8c6e4" stroke="#0d5c9a" stroke-width="1.4"/>
<rect x="3" y="3" width="4" height="1.5" fill="#fff"/><rect x="3" y="6" width="4" height="1.5" fill="#fff"/>
<path d="M6 9.5 H11 V6.5 L16.5 11.5 L11 16.5 V13.5 H6 Z" fill="#7cbd2a" stroke="#2f7a30" stroke-width="1.1"/></svg>
<svg class="a" style="left:280px;top:142px" width="21" height="20" viewBox="0 0 21 20"><rect x="0" y="0" width="20" height="5.5" fill="#0d5c9a"/>
<rect x="1.5" y="1.5" width="17" height="2.2" fill="#fff"/>
<rect x="1.3" y="5.5" width="3" height="4.5" fill="#8c7f74"/><rect x="15.7" y="5.5" width="3" height="4.5" fill="#8c7f74"/>
<rect x="3.7" y="4.5" width="12.6" height="15" fill="#fff" stroke="#0d5c9a" stroke-width="1.4"/>
<rect x="3" y="16.5" width="14" height="3.5" fill="#0d5c9a"/>
<rect x="5" y="17.2" width="10" height="1.2" fill="#fff"/>
<path d="M7 5.5 V7 L10 10 L7.5 15.5 M13 5.5 V7 L10 10 L12.5 15.5" fill="none" stroke="#1d4a8a" stroke-width="0.9"/></svg>
<svg class="a" style="left:308px;top:143px" width="20" height="18" viewBox="0 0 20 18"><rect x="0" y="0" width="20" height="18" fill="#555"/><rect x="1.5" y="1.5" width="4.8" height="3.8" fill="#ffd966"/><rect x="7.7" y="1.5" width="4.8" height="3.8" fill="#a7c4e4"/><rect x="13.9" y="1.5" width="4.8" height="3.8" fill="#a9d27f"/><rect x="1.5" y="6.7" width="4.8" height="3.8" fill="#f6a01e"/><rect x="7.7" y="6.7" width="4.8" height="3.8" fill="#dcb6a6"/><rect x="13.9" y="6.7" width="4.8" height="3.8" fill="#ffc700"/><rect x="1.5" y="11.9" width="4.8" height="3.8" fill="#f9c8cf"/><rect x="7.7" y="11.9" width="4.8" height="3.8" fill="#b5df9d"/><rect x="13.9" y="11.9" width="4.8" height="3.8" fill="#90b9e1"/></svg>
<svg class="a" style="left:336px;top:143px" width="20" height="18" viewBox="0 0 20 18"><rect x="5" y="0" width="15" height="18" fill="#555"/><rect x="6.5" y="1.5" width="4.6" height="3.9" fill="#fff"/><rect x="12.5" y="1.5" width="4.6" height="3.9" fill="#fff"/><rect x="6.5" y="6.8" width="4.6" height="3.9" fill="#fff"/><rect x="12.5" y="6.8" width="4.6" height="3.9" fill="#fff"/><rect x="6.5" y="12.1" width="4.6" height="3.9" fill="#fff"/><rect x="12.5" y="12.1" width="4.6" height="3.9" fill="#fff"/><rect x="18.6" y="0" width="1.4" height="18" fill="#fff" opacity="0"/><rect x="6.5" y="6.8" width="4.6" height="3.9" fill="#d6e4f0"/><rect x="0.6" y="6.4" width="6.2" height="5.2" fill="#ffc81a" stroke="#e65a10" stroke-width="1.2"/></svg>
<svg class="a" style="left:363px;top:142px" width="21" height="21" viewBox="0 0 21 21"><rect x="5.5" y="0" width="15" height="17" fill="#5a5a5a"/><rect x="7.0" y="1.5" width="4.6" height="3.8" fill="#fff"/><rect x="13.0" y="1.5" width="4.6" height="3.8" fill="#fff"/><rect x="7.0" y="6.7" width="4.6" height="3.8" fill="#fff"/><rect x="13.0" y="6.7" width="4.6" height="3.8" fill="#fff"/><rect x="7.0" y="11.9" width="4.6" height="3.8" fill="#fff"/><rect x="13.0" y="11.9" width="4.6" height="3.8" fill="#fff"/><rect x="7" y="6.7" width="4.6" height="3.8" fill="#d6e4f0"/><rect x="0.6" y="5.6" width="7" height="6.2" fill="#ffd640" stroke="#e65a10" stroke-width="1.3"/><rect x="10" y="9" width="11" height="12" fill="#d1dde8"/><rect x="10.8" y="9.5" width="9.5" height="10.5" fill="#0d5c9a"/><rect x="12.3" y="10.7" width="6.5" height="8" fill="#a8c6e4"/><rect x="13" y="11" width="5" height="3" fill="#0d5c9a"/><rect x="14.3" y="11.5" width="2.3" height="2" fill="#fff"/><rect x="13" y="15.5" width="5" height="3.3" fill="#0d5c9a"/><rect x="14.3" y="16.3" width="2.3" height="2" fill="#fff"/></svg>
<svg class="a" style="left:15px;top:16px" width="21" height="16" viewBox="0 0 21 16"><path d="M13.4 3.2 V1.6 H1.7 V13.2 H13.4 V11.6" fill="none" stroke="#1b2d63" stroke-width="1.3"/><path d="M7.7 5.6 H18.6 L14.6 9.3 H7.7 Z" fill="none" stroke="#1b2d63" stroke-width="1.25"/></svg>
<!-- menu -->
<div class="menu" style="left:49.63px;transform:scaleX(0.8739)"><u>L</u>ist</div>
<div class="menu" style="left:96.44px;transform:scaleX(0.8615)"><u>E</u>dit</div>
<div class="menu" style="left:145.67px;transform:scaleX(0.9250)"><u>G</u>oto</div>
<div class="menu" style="left:202.08px;transform:scaleX(0.9182)"><u>S</u>ettings</div>
<div class="menu" style="left:279.24px;transform:scaleX(0.9600)">S<u>y</u>stem</div>
<div class="menu" style="left:354.19px;transform:scaleX(0.9067)"><u>H</u>elp</div>
</body></html>
